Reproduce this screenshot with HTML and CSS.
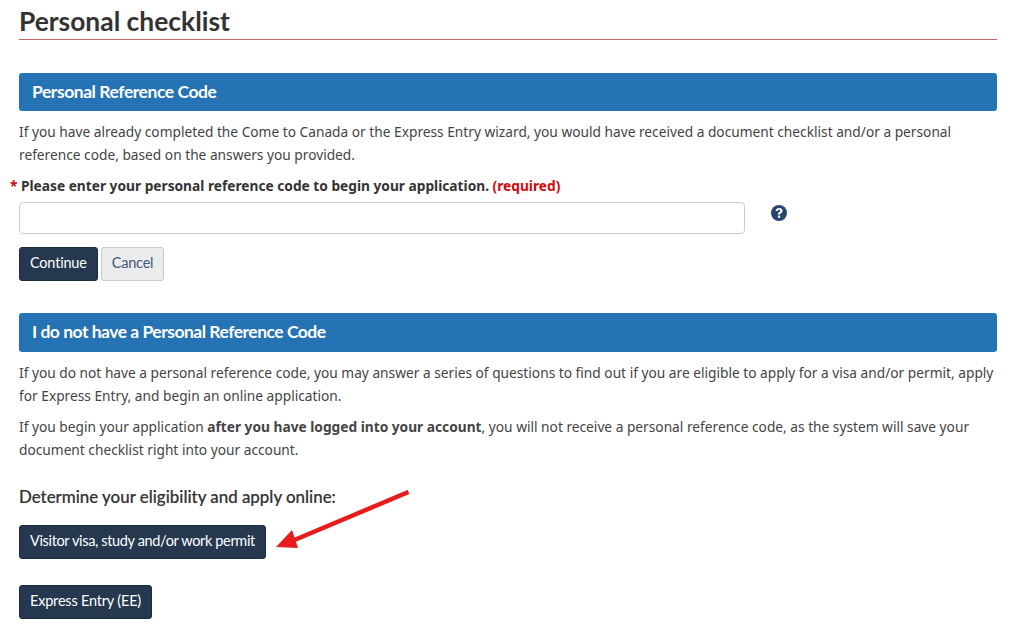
FILE: index.html
```html
<!DOCTYPE html>
<html lang="en">
<head>
  <meta charset="UTF-8">
  <title>Personal checklist</title>
  <link rel="stylesheet" href="styles.css">
</head>
<body>
  <div class="container">
    <h1 class="page-title">Personal checklist</h1>

    <section class="panel-section">
      <h2 class="panel-heading">Personal Reference Code</h2>
      <p>If you have already completed the Come to Canada or the Express Entry wizard, you would have received a document checklist and/or a personal reference code, based on the answers you provided.</p>
      <label class="field-label" for="ref-code"><span class="star">*</span> Please enter your personal reference code to begin your application. <span class="required">(required)</span></label>
      <div class="field-row">
        <input class="text-input" id="ref-code" type="text">
        <svg class="help-icon" viewBox="0 0 16 16" width="16" height="16">
          <circle cx="8" cy="8" r="8" fill="#26456e"/>
          <path d="M4.6 6.1C4.7 4 6.2 2.9 8.2 2.9c1.9 0 3.4 1.1 3.4 2.9 0 1.4-.8 2-1.6 2.5-.6.4-.8.6-.8 1.2H6.9c0-1.3.4-1.9 1.3-2.5.6-.4 1-.7 1-1.2 0-.6-.5-1-1.1-1-.8 0-1.2.5-1.3 1.3z" fill="#fff"/>
          <rect x="6.9" y="10.6" width="2.3" height="2.2" fill="#fff"/>
        </svg>
      </div>
      <div class="btn-row">
        <button class="btn btn-primary">Continue</button>
        <button class="btn btn-default">Cancel</button>
      </div>
    </section>

    <section class="panel-section second">
      <h2 class="panel-heading">I do not have a Personal Reference Code</h2>
      <p>If you do not have a personal reference code, you may answer a series of questions to find out if you are eligible to apply for a visa and/or permit, apply for Express Entry, and begin an online application.</p>
      <p>If you begin your application <strong>after you have logged into your account</strong>, you will not receive a personal reference code, as the system will save your document checklist right into your account.</p>
      <h3 class="sub-heading">Determine your eligibility and apply online:</h3>
      <div class="stack">
        <button class="btn btn-primary btn-long">Visitor visa, study and/or work permit</button>
        <button class="btn btn-primary">Express Entry (EE)</button>
      </div>
    </section>

    <!-- annotation drawn over the screenshot -->
    <svg class="arrow" viewBox="0 0 134 60" width="134" height="60">
      <path d="M132.500 2 L16 51" stroke="#e81c1c" stroke-width="4.500" fill="none"/>
      <polygon points="0,57 16,40 22,58" fill="#e81c1c"/>
    </svg>
  </div>
</body>
</html>
```

FILE: styles.css
```css
body {
  margin: 0;
  background-color: #fff;
  color: #444;
  font-family: "Noto Sans", sans-serif;
  font-size: 13.73px;
  line-height: 23px;
  overflow: hidden;
}

.container {
  position: relative;
  height: 633px;
  margin: 0 27px 0 19px;
}

.page-title {
  margin: 0;
  height: 39px;
  border-bottom: 1px solid #c4666c;
  font-family: Lato, sans-serif;
  font-size: 26.4px;
  font-weight: 700;
  line-height: 42px;
  color: #333;
}

.panel-section {
  margin-top: 33px;
}

.panel-section.second {
  margin-top: 32px;
}

.panel-heading {
  margin: 0 0 9px;
  height: 38px;
  padding-left: 13px;
  background-color: #2572b4;
  border-radius: 3px;
  font-family: Lato, sans-serif;
  font-size: 17.5px;
  font-weight: 700;
  line-height: 38px;
  color: #fff;
  letter-spacing: -0.45px;
}

.second .panel-heading {
  height: 39px;
  letter-spacing: -0.5px;
}

p {
  margin: 0 0 8px;
}

.field-label {
  display: block;
  margin: 7px 0 5px -9px;
  font-weight: 700;
  color: #333;
}

.star,
.required {
  color: #d3080c;
}

.field-row {
  display: flex;
  align-items: flex-start;
  gap: 26px;
}

.text-input {
  box-sizing: border-box;
  width: 726px;
  height: 32px;
  padding: 0 10px;
  background: #fff;
  border: 1px solid #ccc;
  border-radius: 4px;
}

.help-icon {
  margin-top: 3px;
}

.btn-row {
  display: flex;
  gap: 3px;
  margin-top: 13px;
}

.btn {
  box-sizing: border-box;
  height: 34px;
  padding: 0 10px 2px;
  border-radius: 3px;
  font-family: Lato, sans-serif;
  font-size: 14.5px;
  line-height: 30px;
  letter-spacing: -0.2px;
  cursor: pointer;
}

.btn-long {
  letter-spacing: -0.35px;
}

.btn-primary {
  background-color: #263850;
  border: 1px solid #1d2b3e;
  color: #fff;
}

.btn-default {
  background-color: #eaebed;
  border: 1px solid #c9ccd1;
  color: #3f5878;
}

.sub-heading {
  margin: 24px 0 16px;
  font-family: Lato, sans-serif;
  font-size: 16.9px;
  font-weight: 500;
  line-height: 24px;
  color: #333;
  -webkit-text-stroke: 0.2px #333;
}

.stack {
  display: flex;
  flex-direction: column;
  align-items: flex-start;
  gap: 26px;
}

.arrow {
  position: absolute;
  left: 257px;
  top: 490px;
}
```
